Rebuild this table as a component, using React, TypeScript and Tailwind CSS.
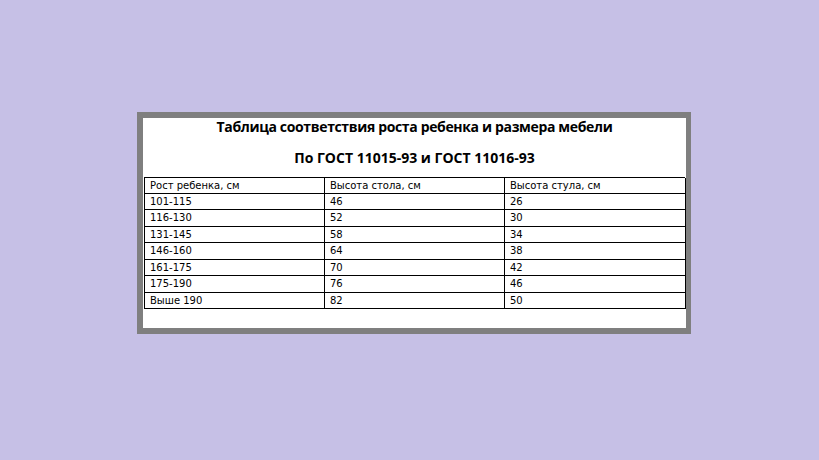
import React from 'react';

const ROWS: [string, string, string, string][] = [
  ['Рост ребенка, см', 'Высота стола, см', 'Высота стула, см', 'h-[16px]'],
  ['101-115', '46', '26', 'h-[16px]'],
  ['116-130', '52', '30', 'h-[17px]'],
  ['131-145', '58', '34', 'h-[16px]'],
  ['146-160', '64', '38', 'h-[17px]'],
  ['161-175', '70', '42', 'h-[16px]'],
  ['175-190', '76', '46', 'h-[17px]'],
  ['Выше 190', '82', '50', 'h-[16px]'],
];

const App = () => {
  return (
    <div className="w-[819px] h-[460px] bg-[#c6c0e6] pl-[137px] pt-[112px] overflow-hidden">
      <div className="w-[554px] h-[222px] bg-white border-[6px] border-r-[5px] border-[#7f7f7f] flex flex-col">
        {/* heading */}
        <div className="h-[59px] flex flex-col items-center font-['Open_Sans',sans-serif] font-bold text-[14px] text-black leading-none">
          <div className="pt-[2px] tracking-[-0.35px]">Таблица соответствия роста ребенка и размера мебели</div>
          <div className="pt-[17px]">По ГОСТ 11015-93 и ГОСТ 11016-93</div>
        </div>

        {/* table */}
        <div className="mx-[1px] border-t border-l border-black font-['DejaVu_Sans',sans-serif] text-[10px] text-black">
          {ROWS.map(([a, b, c, h]) => (
            <div key={a} className={`grid grid-cols-[180px_180px_181px] ${h}`}>
              {[a, b, c].map((t, i) => (
                <div key={i} className="border-r border-b border-black pl-[5px] flex items-center leading-none">
                  {t}
                </div>
              ))}
            </div>
          ))}
        </div>
      </div>
    </div>
  );
};

export default App;
